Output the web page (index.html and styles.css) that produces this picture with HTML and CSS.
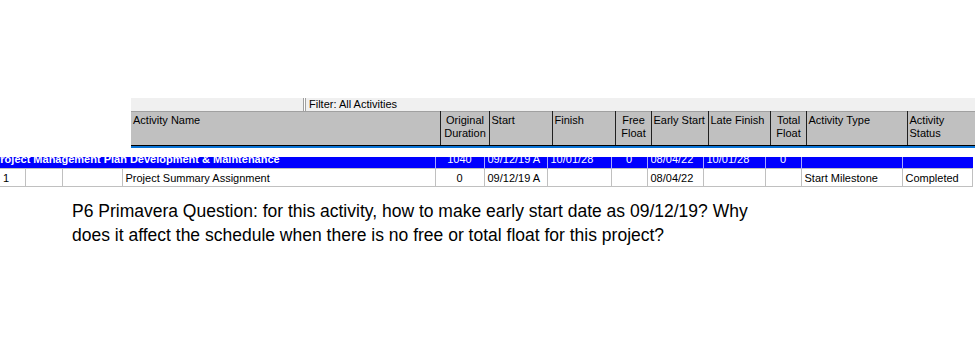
FILE: index.html
```html
<!DOCTYPE html>
<html lang="en">
<head>
  <meta charset="UTF-8">
  <title>P6 Activities</title>
  <link rel="stylesheet" href="styles.css">
</head>
<body>
<div class="filter-bar">
  <div class="filter-left"></div>
  <div class="filter-label">Filter: All Activities</div>
</div>

<table class="grid-head">
  <colgroup>
    <col style="width:309px"><col style="width:49px"><col style="width:63px"><col style="width:63px">
    <col style="width:36px"><col style="width:57px"><col style="width:62px"><col style="width:36px">
    <col style="width:101px"><col>
  </colgroup>
  <tr>
    <th>Activity Name</th>
    <th class="mid">Original Duration</th>
    <th>Start</th>
    <th>Finish</th>
    <th class="mid">Free Float</th>
    <th>Early Start</th>
    <th>Late Finish</th>
    <th class="mid">Total Float</th>
    <th>Activity Type</th>
    <th>Activity Status</th>
  </tr>
</table>
<div class="head-rule"></div>

<table class="rows">
  <colgroup>
    <col style="width:25px"><col style="width:37px"><col style="width:60px"><col style="width:313px">
    <col style="width:49px"><col style="width:63px"><col style="width:64px"><col style="width:36px">
    <col style="width:56px"><col style="width:62px"><col style="width:36px"><col style="width:101px">
    <col>
  </colgroup>
  <tr class="wbs">
    <td colspan="4"><div class="cut name"><span>Project Management Plan Development &amp; Maintenance</span></div></td>
    <td class="mid"><div class="cut"><span>1040</span></div></td>
    <td><div class="cut"><span>09/12/19 A</span></div></td>
    <td><div class="cut"><span>10/01/28</span></div></td>
    <td class="mid"><div class="cut"><span>0</span></div></td>
    <td><div class="cut"><span>08/04/22</span></div></td>
    <td><div class="cut"><span>10/01/28</span></div></td>
    <td class="mid"><div class="cut"><span>0</span></div></td>
    <td></td>
    <td></td>
  </tr>
  <tr class="act">
    <td>1</td>
    <td></td>
    <td></td>
    <td>Project Summary Assignment</td>
    <td class="mid">0</td>
    <td>09/12/19 A</td>
    <td></td>
    <td></td>
    <td>08/04/22</td>
    <td></td>
    <td></td>
    <td>Start Milestone</td>
    <td>Completed</td>
  </tr>
</table>

<p class="question">
  P6 Primavera Question: for this activity, how to make early start date as 09/12/19? Why<br>
  does it affect the schedule when there is no free or total float for this project?
</p>
</body>
</html>
```

FILE: styles.css
```css
body {
  margin: 0;
  font-family: "Liberation Sans", Arial, sans-serif;
  font-size: 11px;
  color: #000;
  background-color: #fff;
}
.filter-bar {
  display: flex;
  margin: 98px 0 0 131px;
  height: 13px;
}
.filter-left {
  width: 172px;
  background-color: #f0f0f0;
  border-right: 1px solid #a0a0a0;
}
.filter-label {
  flex: 1;
  margin-left: 1px;
  padding-left: 3px;
  line-height: 13px;
  background-color: #f0f0f0;
  border-left: 1px solid #a0a0a0;
}
.grid-head {
  margin-left: 131px;
  width: 844px;
  table-layout: fixed;
  border-collapse: collapse;
  background-color: #c0c0c0;
  border-top: 1px solid #a0a0a0;
}
.grid-head th {
  height: 34px;
  padding: 2px 1px 0 2px;
  vertical-align: top;
  text-align: left;
  font-weight: normal;
  line-height: 13px;
  border-right: 1px solid #202020;
  border-bottom: 1px solid #000;
  box-sizing: border-box;
}
.grid-head th:last-child {
  border-right: none;
}
.grid-head th.mid {
  text-align: center;
}
.head-rule {
  margin-left: 131px;
  height: 2px;
  background-color: #0a74d6;
}
.rows {
  margin-top: 9px;
  width: 973px;
  table-layout: fixed;
  border-collapse: collapse;
}
.rows td {
  padding: 0 0 0 3px;
  white-space: nowrap;
  overflow: hidden;
}
.rows td.mid {
  text-align: center;
  padding: 0;
}
.wbs td {
  height: 11px;
  padding-top: 0;
  padding-bottom: 0;
  background-color: #0000ff;
  color: #fff;
  border-right: 1px solid #a8a8ff;
}
.wbs td:last-child {
  border-right: none;
}
.cut {
  height: 11px;
  overflow: hidden;
}
.cut span {
  display: block;
  margin-top: -4px;
  line-height: 13px;
}
.cut.name {
  margin-left: -10px;
  font-weight: bold;
}
.act td {
  height: 17px;
  border: 1px solid #c0c0c0;
  border-left: none;
  line-height: 16px;
}
.question {
  margin: 12px 0 0 72px;
  font-size: 17.5px;
  line-height: 24px;
  color: #000;
}
```
